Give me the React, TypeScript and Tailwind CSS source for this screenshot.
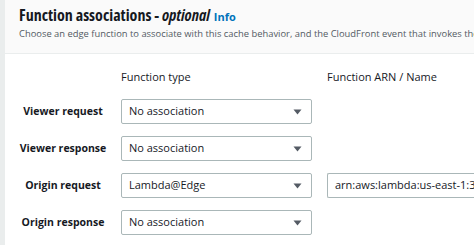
import React from "react";

const rows = [
  { label: "Viewer request", value: "No association", arn: false },
  { label: "Viewer response", value: "No association", arn: false },
  { label: "Origin request", value: "Lambda@Edge", arn: true },
  { label: "Origin response", value: "No association", arn: false },
];

function Caret() {
  return (
    <svg width="9" height="6" viewBox="0 0 9 6" className="shrink-0">
      <path d="M0.5 0.5h8L4.5 5.5z" fill="#545b64" />
    </svg>
  );
}

export default function App() {
  return (
    <div
      className="w-[474px] h-[245px] overflow-hidden flex bg-[#eaeded] text-[#16191f]"
      style={{ fontFamily: '"Open Sans", "Noto Sans", sans-serif' }}
    >
      <div className="w-[5px] shrink-0" />
      <div className="flex-1 min-w-0 bg-white flex flex-col">
        {/* Header */}
        <div className="h-[54px] shrink-0 bg-[#fafafa] border-b border-[#eaeded] pl-[14px] pt-[5px] whitespace-nowrap overflow-hidden">
          <div className="flex items-baseline gap-[4px]">
            <h2 className="text-[16px] font-bold leading-[20px] font-stretch-semi-condensed">
              Function associations - <i>optional</i>
            </h2>
            <span className="text-[11px] font-bold text-[#0073bb]">Info</span>
          </div>
          <p className="text-[9.4px] leading-[14px] text-[#545b64] mt-[1px]">
            Choose an edge function to associate with this cache behavior, and the CloudFront event that invokes the
            function.
          </p>
        </div>

        {/* Table */}
        <div className="pt-[15px] whitespace-nowrap">
          <div className="flex text-[11px] leading-[16px] h-[29px]">
            <div className="w-[116px] shrink-0" />
            <div className="w-[191px] shrink-0">Function type</div>
            <div className="ml-[15px]">Function ARN / Name</div>
          </div>
          <div className="flex flex-col gap-[12px] mt-[1px]">
            {rows.map((r) => (
              <div key={r.label} className="flex items-center h-[25px]">
                <div className="w-[116px] shrink-0 text-center text-[10.5px] font-bold">{r.label}</div>
                <div className="w-[191px] h-[25px] shrink-0 border border-[#aab7b8] rounded-[2px] flex items-center justify-between pl-[7px] pr-[9px] text-[11px]">
                  <span>{r.value}</span>
                  <Caret />
                </div>
                {r.arn && (
                  <div className="ml-[15px] h-[25px] flex-1 min-w-0 border border-[#aab7b8] border-r-0 rounded-l-[2px] flex items-center pl-[7px] text-[11px] overflow-hidden">
                    arn:aws:lambda:us-east-1:345678901234:function:edge
                  </div>
                )}
              </div>
            ))}
          </div>
        </div>
      </div>
    </div>
  );
}
